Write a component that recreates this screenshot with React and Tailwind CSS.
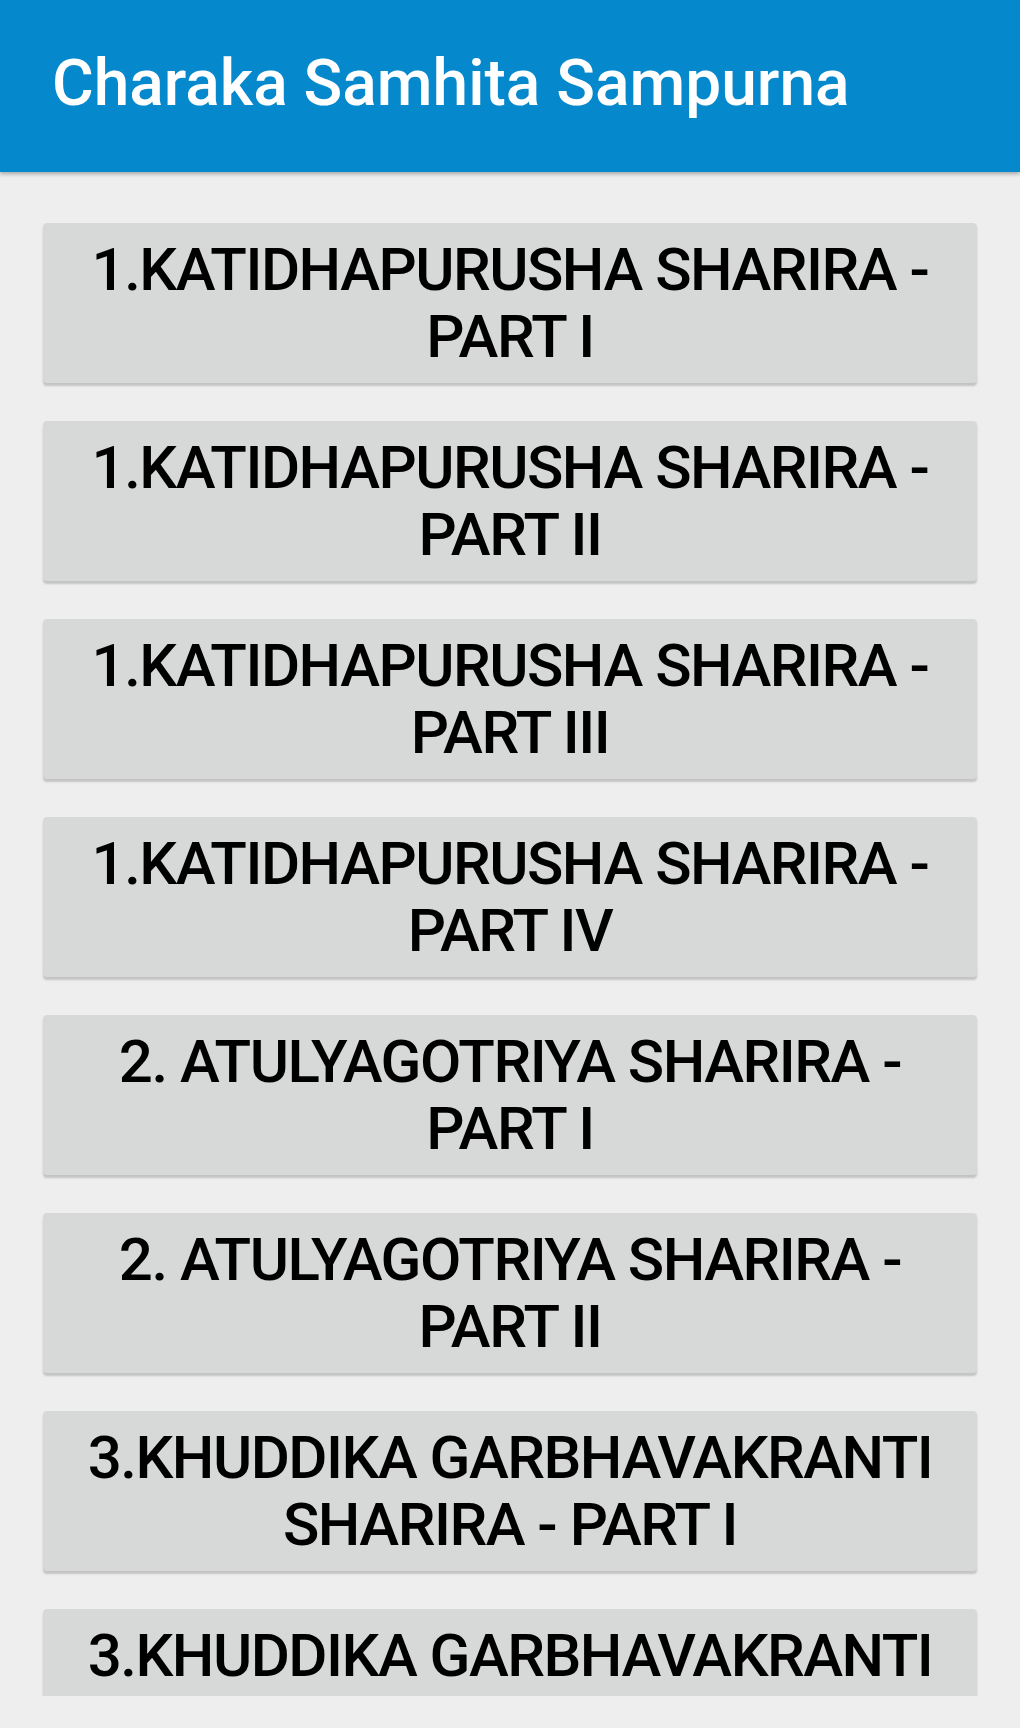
import React from "react";

const chapters = [
  "1.KATIDHAPURUSHA SHARIRA - PART I",
  "1.KATIDHAPURUSHA SHARIRA - PART II",
  "1.KATIDHAPURUSHA SHARIRA - PART III",
  "1.KATIDHAPURUSHA SHARIRA - PART IV",
  "2. ATULYAGOTRIYA SHARIRA - PART I",
  "2. ATULYAGOTRIYA SHARIRA - PART II",
  "3.KHUDDIKA GARBHAVAKRANTI SHARIRA - PART I",
  "3.KHUDDIKA GARBHAVAKRANTI SHARIRA - PART II",
];

export default function App() {
  return (
    <div className="w-[1020px] h-[1728px] bg-[#eeeeee] overflow-hidden" style={{ fontFamily: "Roboto, 'Noto Sans', sans-serif" }}>
      {/* Toolbar */}
      <header className="relative z-10 h-[172px] bg-[#0689cc] flex items-center pl-[52px] shadow-[0_2px_4px_rgba(0,0,0,0.3)]">
        <h1 className="text-white text-[64px] font-medium leading-none pb-[4px]">Charaka Samhita Sampurna</h1>
      </header>

      {/* Chapter list, clipped like a scrolling view */}
      <div className="h-[1524px] overflow-hidden pt-[51px] px-[43px] flex flex-col gap-[38px]">
        {chapters.map((c) => (
          <button
            key={c}
            className="shrink-0 w-full min-h-[160px] bg-[#d7d8d8] rounded-[4px] shadow-[0_3px_2px_rgba(0,0,0,0.18)] flex items-center justify-center px-[36px] text-black text-[60px] font-medium leading-[67px] tracking-[-1.5px] text-center"
          >
            {c}
          </button>
        ))}
      </div>
    </div>
  );
}
